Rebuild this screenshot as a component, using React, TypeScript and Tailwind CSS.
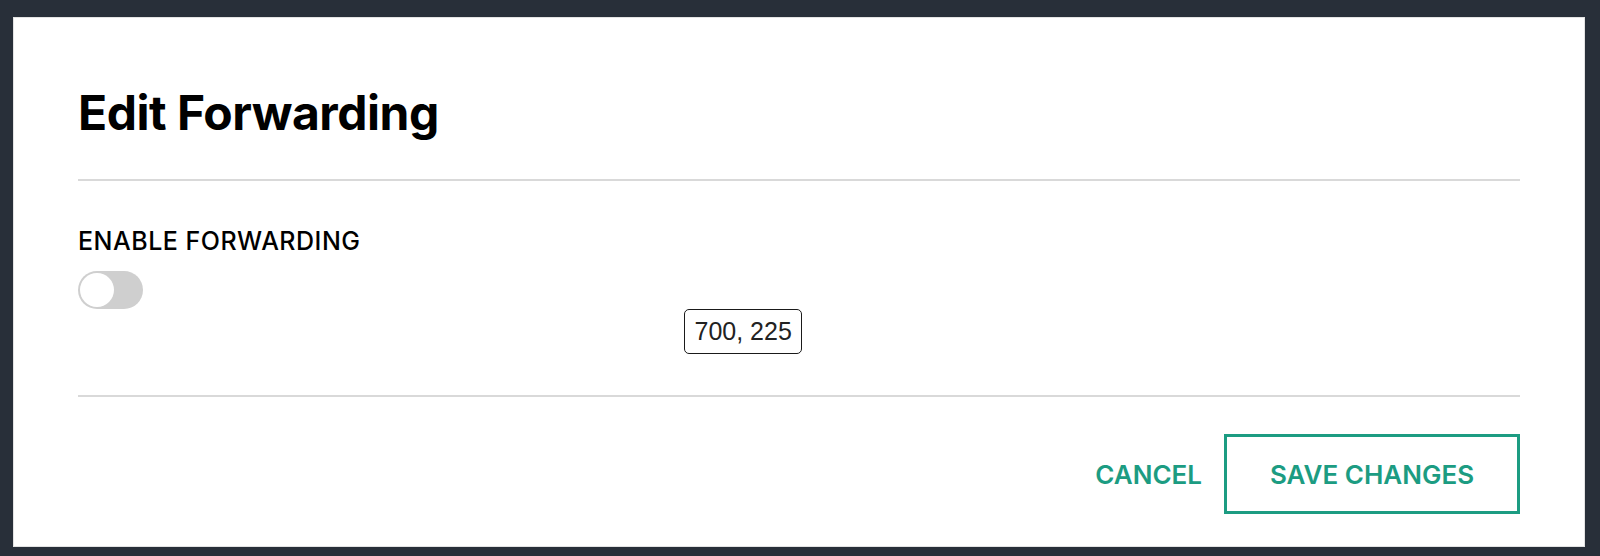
import React from "react";

export default function App() {
  return (
    <div className="w-[1600px] h-[556px] bg-[#282f39] pt-[17px] pl-[13px] pr-[15px] pb-[9px] overflow-hidden">
      <div
        className="relative h-full bg-white border border-[#e3e3e3] px-[64px] pt-[66px]"
        style={{ fontFamily: "Inter, 'Noto Sans', sans-serif" }}
      >
        <h1 className="text-[48px] leading-[58px] font-bold text-black tracking-[-0.01em]">
          Edit Forwarding
        </h1>
        <div className="mt-[37px] h-[2px] bg-[#d9d9d9]" />
        <div className="mt-[45px] text-[25px] leading-[30px] font-medium text-black tracking-[0.02em]">
          ENABLE FORWARDING
        </div>
        <button
          type="button"
          className="mt-[15px] flex items-center w-[65px] h-[38px] rounded-full bg-[#cfcfcf] p-[2px]"
        >
          <span className="block w-[34px] h-[34px] rounded-full bg-white" />
        </button>
        <div className="mt-[86px] h-[2px] bg-[#d9d9d9]" />
        <div className="mt-[37px] flex justify-end items-center gap-[22px]">
          <button
            type="button"
            className="text-[26px] leading-[31px] font-semibold text-[#1c9c82]"
          >
            CANCEL
          </button>
          <button
            type="button"
            className="w-[296px] h-[80px] border-[3px] border-[#1c9c82] text-[26px] leading-[31px] font-semibold text-[#1c9c82]"
          >
            SAVE CHANGES
          </button>
        </div>
        <div
          className="absolute left-[670px] top-[291px] border-[1.5px] border-[#1a1a1a] rounded-[5px] bg-white px-[9.5px] py-[7px] text-[25px] leading-[29px] text-[#222]"
          style={{ fontFamily: "'Liberation Sans', Arial, sans-serif" }}
        >
          700, 225
        </div>
      </div>
    </div>
  );
}
